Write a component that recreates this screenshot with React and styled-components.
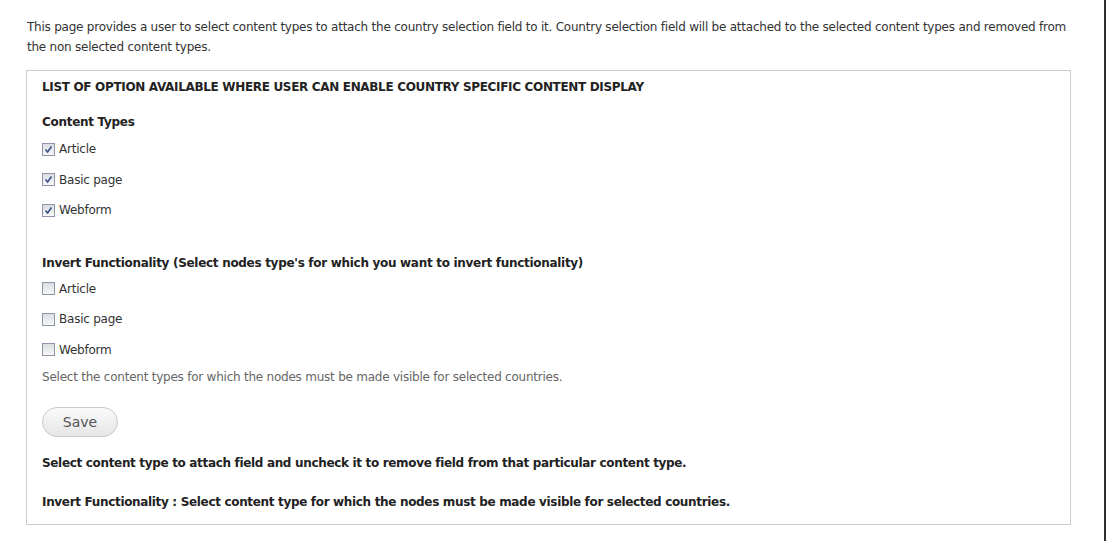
import React from 'react'
import styled, { createGlobalStyle } from 'styled-components'

const GlobalStyle = createGlobalStyle`
  html, body {
    margin: 0;
    padding: 0;
    background: #fff;
  }
  body {
    font-family: "DejaVu Sans", Verdana, sans-serif;
    font-size: 12px;
    letter-spacing: -0.23px;
    color: #333;
  }
`

const Page = styled.div`
  display: flex;
  width: 1106px;
  height: 541px;
  overflow: hidden;
`

const Main = styled.div`
  flex: 1;
  padding: 17px 33px 0 26px;
`

const Edge = styled.div`
  width: 2px;
  background: #2e2e2e;
`

const Intro = styled.p`
  margin: 0 0 13px 1px;
  line-height: 20px;
  font-size: 12px;
  color: #333;
`

const Fieldset = styled.div`
  border: 1px solid #ccc;
  height: 455px;
  box-sizing: border-box;
  padding: 8px 15px 0;
`

const Legend = styled.div`
  font-weight: bold;
  font-size: 12px;
  letter-spacing: -0.33px;
  color: #222;
  line-height: 17px;
  margin-bottom: 18px;
`

const GroupTitle = styled.div`
  font-weight: bold;
  font-size: 12px;
  letter-spacing: -0.3px;
  color: #222;
  line-height: 17px;
  margin-bottom: ${p => p.$space}px;
`

const Group = styled.div`
  margin-bottom: ${p => p.$gap || 0}px;
`

const Option = styled.label`
  display: flex;
  align-items: center;
  gap: 4px;
  height: 30.5px;
  font-size: 12px;
  color: #333;
`

const Box = styled.span`
  width: 11px;
  height: 11px;
  border: 1px solid #8f95a8;
  background: linear-gradient(#dcdde2, #f7f7f7);
  display: flex;
  align-items: center;
  justify-content: center;
`

const Description = styled.div`
  font-size: 12px;
  color: #666;
  line-height: 17px;
  margin-top: 4px;
  margin-bottom: 21px;
`

const SaveButton = styled.button`
  width: 76px;
  height: 30px;
  border-radius: 15px;
  border: 1px solid #c8c8c8;
  background: linear-gradient(#fafafa, #e6e6e6);
  font-family: "DejaVu Sans", Verdana, sans-serif;
  font-size: 14px;
  color: #555;
  padding: 0;
  margin-bottom: 18px;
`

const Note = styled.p`
  margin: 0 0 22px;
  font-weight: bold;
  font-size: 12px;
  letter-spacing: -0.33px;
  color: #222;
  line-height: 17px;
`

const Check = ({ checked, label }) => (
  <Option>
    <Box>
      {checked && (
        <svg width="9" height="9" viewBox="0 0 9 9">
          <path d="M1.5 4.5 L3.6 7 L7.5 1.5" fill="none" stroke="#3a4f8a" strokeWidth="1.6" />
        </svg>
      )}
    </Box>
    {label}
  </Option>
)

const types = ['Article', 'Basic page', 'Webform']

const App = () => (
  <Page>
    <GlobalStyle />
    <Main>
      <Intro>
        This page provides a user to select content types to attach the country selection field to it. Country selection field will be attached to the selected content types and removed from the non selected content types.
      </Intro>
      <Fieldset>
        <Legend>LIST OF OPTION AVAILABLE WHERE USER CAN ENABLE COUNTRY SPECIFIC CONTENT DISPLAY</Legend>
        <Group $gap={29}>
          <GroupTitle $space={3}>Content Types</GroupTitle>
          {types.map(t => <Check key={t} checked label={t} />)}
        </Group>
        <Group>
          <GroupTitle $space={2}>Invert Functionality (Select nodes type's for which you want to invert functionality)</GroupTitle>
          {types.map(t => <Check key={t} label={t} />)}
          <Description>Select the content types for which the nodes must be made visible for selected countries.</Description>
        </Group>
        <SaveButton>Save</SaveButton>
        <Note>Select content type to attach field and uncheck it to remove field from that particular content type.</Note>
        <Note>Invert Functionality : Select content type for which the nodes must be made visible for selected countries.</Note>
      </Fieldset>
    </Main>
    <Edge />
  </Page>
)

export default App
